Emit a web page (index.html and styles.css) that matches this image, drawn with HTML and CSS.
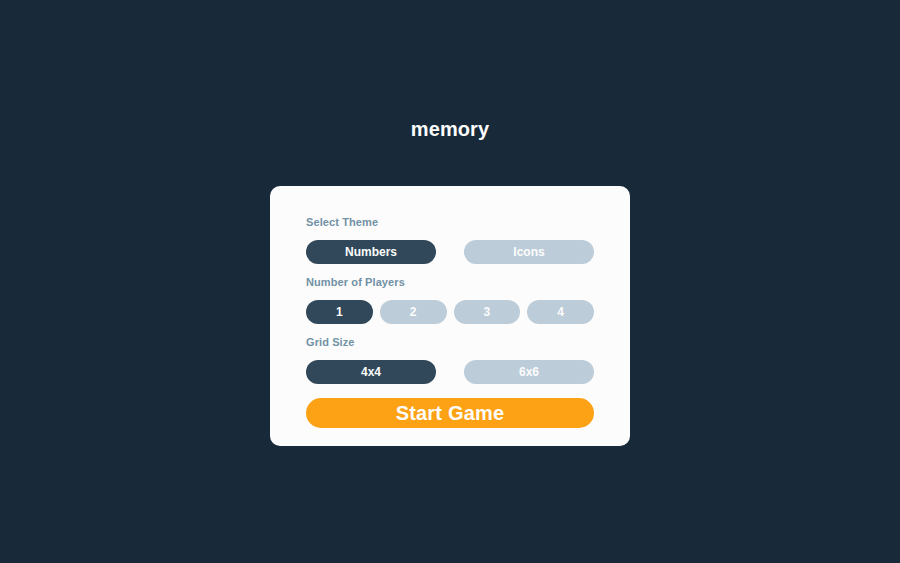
FILE: index.html
```html
<!DOCTYPE html>
<html>
<head>
<meta charset="utf-8">
<link rel="stylesheet" href="styles.css">
</head>
<body>
<main class="page">
  <h1 class="logo">memory</h1>
  <section class="card">
    <div class="label">Select Theme</div>
    <div class="row two">
      <button class="opt active">Numbers</button>
      <button class="opt">Icons</button>
    </div>
    <div class="label">Number of Players</div>
    <div class="row four">
      <button class="opt active">1</button>
      <button class="opt">2</button>
      <button class="opt">3</button>
      <button class="opt">4</button>
    </div>
    <div class="label">Grid Size</div>
    <div class="row two">
      <button class="opt active">4x4</button>
      <button class="opt">6x6</button>
    </div>
    <button class="start">Start Game</button>
  </section>
</main>
</body>
</html>
```
FILE: styles.css
```css
* { box-sizing: border-box; }
html, body { margin: 0; padding: 0; }
body {
  background: #182a3a;
  font-family: "Liberation Sans", Arial, sans-serif;
  height: 563px;
}
.page {
  display: flex;
  flex-direction: column;
  align-items: center;
  padding-top: 117px;
}
.logo {
  margin: 0;
  color: #fcfcfc;
  font-size: 20px;
  line-height: 24px;
  font-weight: 700;
  letter-spacing: 0.1px;
}
.card {
  margin-top: 45px;
  width: 360px;
  background: #fcfcfc;
  border-radius: 10px;
  padding: 30px 36px 18px;
  display: flex;
  flex-direction: column;
}
.label {
  color: #7191a5;
  font-size: 11px;
  line-height: 12px;
  font-weight: 700;
  margin-bottom: 12px;
  letter-spacing: 0.1px;
}
.row {
  display: grid;
  margin-bottom: 12px;
}
.row.two { grid-template-columns: 130px 130px; justify-content: space-between; }
.row.four { grid-template-columns: repeat(4, 1fr); column-gap: 7px; }
.opt {
  border: none;
  height: 24px;
  border-radius: 12px;
  background: #bccdd9;
  color: #fcfcfc;
  font-family: inherit;
  font-size: 12px;
  font-weight: 700;
  padding: 0;
}
.opt.active { background: #304859; }
.start {
  margin-top: 2px;
  height: 30px;
  border: none;
  border-radius: 15px;
  background: #fda214;
  color: #fcfcfc;
  font-family: inherit;
  font-size: 20px;
  font-weight: 700;
  letter-spacing: 0.2px;
  padding: 0;
}
```
